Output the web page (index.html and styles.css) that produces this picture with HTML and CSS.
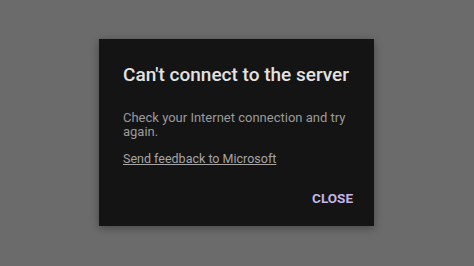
FILE: index.html
```html
<!DOCTYPE html>
<html>
<head>
<meta charset="utf-8">
<link rel="stylesheet" href="styles.css">
</head>
<body>
<div class="backdrop">
  <div class="dialog">
    <h1 class="title">Can't connect to the server</h1>
    <p class="message">Check your Internet connection and try again.</p>
    <a class="link" href="#">Send feedback to Microsoft</a>
    <div class="actions">
      <button class="btn">CLOSE</button>
    </div>
  </div>
</div>
</body>
</html>
```

FILE: styles.css
```css
html, body {
  margin: 0;
  padding: 0;
  width: 474px;
  height: 266px;
  background: #6b6b6b;
  overflow: hidden;
}
.backdrop {
  padding: 39px 0 0 99px;
}
.dialog {
  width: 275px;
  height: 187px;
  box-sizing: border-box;
  background: #141414;
  padding: 24px 21px 0 24px;
  font-family: Roboto, "Liberation Sans", sans-serif;
  box-shadow: 0 2px 8px rgba(0,0,0,0.35);
  display: flex;
  flex-direction: column;
}
.title {
  margin: 0;
  font-size: 19px;
  font-weight: 500;
  color: #e2e2e2;
  line-height: 24px;
  white-space: nowrap;
}
.message {
  margin: 24px 0 0 0;
  font-size: 13px;
  line-height: 14px;
  color: #9a9a9a;
}
.link {
  margin-top: 13px;
  font-size: 12.5px;
  line-height: 14px;
  color: #a4a4a4;
  text-decoration: underline;
  align-self: flex-start;
}
.actions {
  display: flex;
  justify-content: flex-end;
  margin-top: 24px;
}
.btn {
  background: none;
  border: none;
  padding: 0;
  font-family: Roboto, "Liberation Sans", sans-serif;
  font-size: 13.5px;
  font-weight: 700;
  color: #c4b5e4;
  line-height: 16px;
}
```
